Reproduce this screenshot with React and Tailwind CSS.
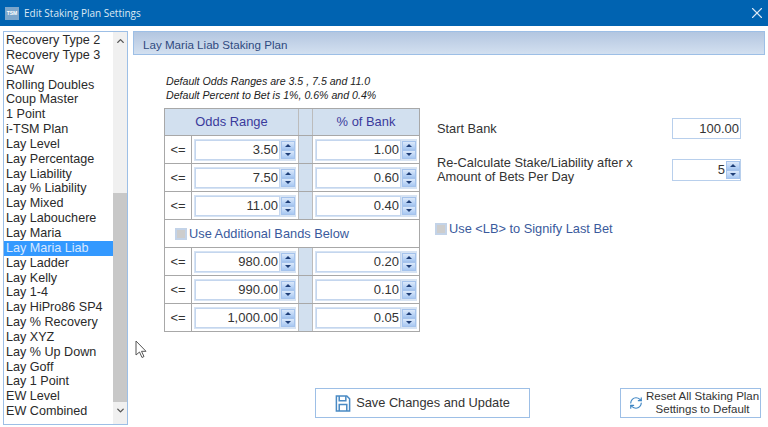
import React from 'react'
import { ChevronUp, ChevronDown, X, RefreshCw } from 'lucide-react'

const plans = ['Recovery Type 2', 'Recovery Type 3', 'SAW', 'Rolling Doubles', 'Coup Master', '1 Point', 'i-TSM Plan', 'Lay Level', 'Lay Percentage', 'Lay Liability', 'Lay % Liability', 'Lay Mixed', 'Lay Labouchere', 'Lay Maria', 'Lay Maria Liab', 'Lay Ladder', 'Lay Kelly', 'Lay 1-4', 'Lay HiPro86 SP4', 'Lay % Recovery', 'Lay XYZ', 'Lay % Up Down', 'Lay Goff', 'Lay 1 Point', 'EW Level', 'EW Combined']

function Spinner() {
  return (
    <div className="flex flex-col w-[14px] h-[18px] shrink-0">
      <div className="flex-1 bg-gradient-to-b from-[#dce9fa] to-[#a8c8f2] border border-[#a5c3ec] flex items-center justify-center">
        <div className="w-0 h-0 border-x-[3px] border-x-transparent border-b-[3px] border-b-[#1f3f78]" />
      </div>
      <div className="flex-1 bg-gradient-to-b from-[#dce9fa] to-[#a8c8f2] border border-[#a5c3ec] flex items-center justify-center">
        <div className="w-0 h-0 border-x-[3px] border-x-transparent border-t-[3px] border-t-[#1f3f78]" />
      </div>
    </div>
  )
}

function NumberBox({ value }) {
  return (
    <div className="flex items-center h-full px-[2px] py-[3px]">
      <div className="flex-1 h-[22px] flex items-center bg-[#d6e3f3] p-px gap-px">
        <div className="flex-1 h-full bg-white border border-[#c4d6ee] text-right text-[13px] leading-[18px] pr-[1px] text-[#333]">{value}</div>
        <Spinner />
      </div>
    </div>
  )
}

function Row({ op, odds, pct }) {
  return (
    <div className="flex h-[28px] border-b border-[#a8a8a8]">
      <div className="w-[27px] border-r border-[#a8a8a8] text-center text-[13px] leading-[27px] text-[#333]">{op}</div>
      <div className="w-[106px]"><NumberBox value={odds} /></div>
      <div className="w-[15px] bg-[#d2e0ef] border-x border-[#bcbcbc]" />
      <div className="flex-1"><NumberBox value={pct} /></div>
    </div>
  )
}

function Check({ label, className }) {
  return (
    <div className={`flex items-center gap-[2px] text-[12.8px] text-[#3a5a9c] ${className}`}>
      <div className="w-[12px] h-[12px] bg-[#cdcdcd] border-2 border-[#c3d3e8]" />
      {label}
    </div>
  )
}

function App() {
  return (
    <div className="w-[768px] h-[427px] bg-white flex flex-col overflow-hidden relative font-['Liberation_Sans',sans-serif]">
      <div className="h-[26px] bg-[#0063b1] flex items-center pl-[5px] pr-[2px] shrink-0">
        <div className="w-[14px] h-[13px] bg-[#7ba6cb] text-white text-[5px] font-bold leading-[13px] text-center">TSM</div>
        <div className="ml-[5px] text-[10px] text-[#dce9f4] font-['Open_Sans',sans-serif]">Edit Staking Plan Settings</div>
        <X size={18} strokeWidth={1.5} className="ml-auto text-[#dbe8f4]" />
      </div>

      <div className="flex pt-[5px] pl-[3px]">
        <div className="w-[125px] h-[394px] border border-[#9dbfe6] flex overflow-hidden">
          <div className="w-[109px] pl-[2px] pt-px text-[12.6px] leading-[14.84px] text-[#2a2a2a] bg-white">
            {plans.map((p) => (
              <div key={p} className={p === 'Lay Maria Liab' ? 'bg-[#3399ff] text-[#d8e8ff] -ml-[2px] pl-[2px] whitespace-nowrap' : 'whitespace-nowrap'}>{p}</div>
            ))}
          </div>
          <div className="w-[14px] bg-[#f0f0f0] flex flex-col items-center">
            <ChevronUp size={11} strokeWidth={3} className="text-[#555] mt-[3px] h-[12px]" />
            <div className="mt-[146px] w-full h-[209px] bg-[#c8c8c8]" />
            <ChevronDown size={11} strokeWidth={3} className="text-[#555] mt-[3px]" />
          </div>
        </div>

        <div className="ml-[5px] w-[632px] flex flex-col">
          <div className="h-[24px] border border-[#9dbfe6] bg-gradient-to-b from-[#b3c6e0] to-[#d3e0f0] text-[#2f4a80] text-[11.6px] leading-[26px] pl-[9px]">Lay Maria Liab Staking Plan</div>

          <div className="flex">
            <div className="ml-[31px] w-[256px]">
              <div className="mt-[19px] text-[10.6px] leading-[14px] italic text-[#222] whitespace-nowrap pl-[2px]">
                <div>Default Odds Ranges are 3.5 , 7.5 and 11.0</div>
                <div>Default Percent to Bet is 1%, 0.6% and 0.4%</div>
              </div>
              <div className="mt-[6px] border border-[#a8a8a8] border-b-0">
                <div className="flex h-[27px] bg-[#d2e0ef] border-b border-[#a8a8a8] text-[#3a3a9c]">
                  <div className="w-[133px] text-center text-[12.9px] leading-[26px]">Odds Range</div>
                  <div className="w-[15px] border-x border-[#bcbcbc]" />
                  <div className="flex-1 text-center text-[12.9px] leading-[26px]">% of Bank</div>
                </div>
                <Row op="<=" odds="3.50" pct="1.00" />
                <Row op="<=" odds="7.50" pct="0.60" />
                <Row op="<=" odds="11.00" pct="0.40" />
                <div className="h-[28px] border-b border-[#a8a8a8] flex items-center pl-[10px]">
                  <Check label="Use Additional Bands Below" />
                </div>
                <Row op="<=" odds="980.00" pct="0.20" />
                <Row op="<=" odds="990.00" pct="0.10" />
                <Row op="<=" odds="1,000.00" pct="0.05" />
              </div>
            </div>

            <div className="ml-[17px] w-[304px] text-[12.8px] text-[#333]">
              <div className="mt-[63px] flex items-center justify-between h-[21px]">
                <div>Start Bank</div>
                <div className="w-[69px] h-[21px] border border-[#b8cfec] text-right pr-[1px] leading-[19px] text-[13px]">100.00</div>
              </div>
              <div className="mt-[17px] flex items-center justify-between">
                <div className="leading-[14px]">Re-Calculate Stake/Liability after x<br />Amount of Bets Per Day</div>
                <div className="w-[69px] h-[22px] border border-[#b8cfec] flex items-center justify-end text-[13px]">
                  5<div className="ml-px"><Spinner /></div>
                </div>
              </div>
              <Check label="Use <LB> to Signify Last Bet" className="mt-[35px] -ml-[2px]" />
            </div>
          </div>

          <div className="flex mt-[56px]">
            <div className="ml-[182px] w-[215px] h-[30px] border border-[#9dbfe6] flex items-center justify-center gap-[5px] text-[12.8px] text-[#333]">
              <svg width="16" height="17" viewBox="0 0 16 18" fill="none" stroke="#4a8ac4" strokeWidth="1.6">
                <path d="M1 1h11l3 3v13H1z" />
                <path d="M4 1v5h7V1M4 17v-7h8v7" />
              </svg>
              Save Changes and Update
            </div>
            <div className="ml-[90px] w-[141px] h-[30px] border border-[#9dbfe6] flex items-center pl-[8px] text-[11.5px] leading-[13px] text-[#333]">
              <RefreshCw size={14} className="text-[#3f86c4] shrink-0" />
              <div className="ml-[3px] text-center whitespace-nowrap">Reset All Staking Plan<br />Settings to Default</div>
            </div>
          </div>
        </div>
      </div>

      <svg className="absolute left-[135px] top-[340px]" width="13" height="19" viewBox="0 0 13 19" fill="#fff" stroke="#555" strokeWidth="1">
        <path d="M1 1v14l3.5-3 2.5 5.5 2-1-2.5-5.2h4.5z" />
      </svg>
    </div>
  )
}

export default App
